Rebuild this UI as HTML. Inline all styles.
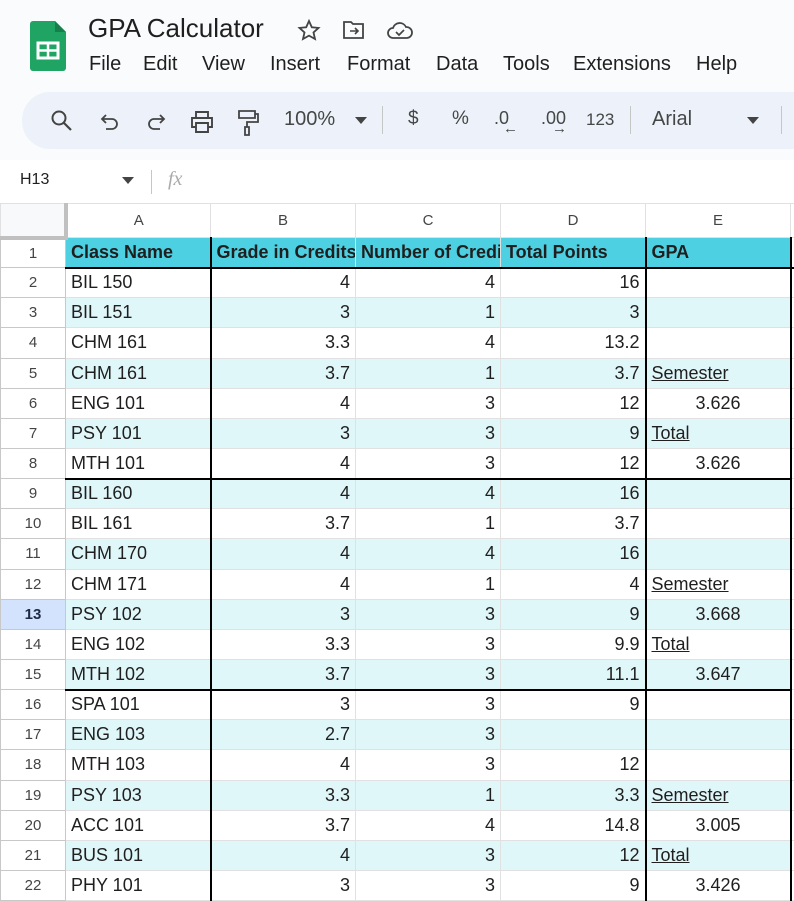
<!DOCTYPE html>
<html><head><meta charset="utf-8"><style>
*{margin:0;padding:0;box-sizing:border-box}
body{width:794px;height:899px;overflow:hidden;background:#fff;font-family:"Liberation Sans",Arial,sans-serif;position:relative;color:#1f1f1f}
.top{position:absolute;left:0;top:0;width:794px;height:160px;background:#f9fbfd}
.title{position:absolute;left:88px;top:13px;font-size:26px;color:#1f1f1f}
.menu{position:absolute;top:53px;font-size:20px;color:#1f1f1f}
.tb{position:absolute;left:22px;top:92px;width:800px;height:57px;background:#edf2fa;border-radius:28px}
.ti{position:absolute;top:108px;font-size:20px;color:#444746}
.sep{position:absolute;top:106px;width:1px;height:28px;background:#c4c7c5}
table{position:absolute;left:0;top:203px;width:800px;border-collapse:collapse;table-layout:fixed;font-size:18px}
td{border:1px solid #e1e1e1;height:30.15px;padding:0 5px;white-space:nowrap;overflow:hidden}
tr.h td{height:34px;text-align:center;font-size:15px;color:#444}
td.rn{text-align:center;font-size:15px;color:#444;background:#fff;border-color:#c8c8c8}
tr.hd td{background:#4dd0e1;font-weight:bold}
tr.o td{background:#e0f7fa}
tr.o td.rn,tr.hd td.rn{background:#fff;font-weight:normal}
.r{text-align:right}.c{text-align:center}.u{text-decoration:underline}
.bl{border-left:2px solid #000!important}
.bb td{border-bottom:2px solid #000}
.bb td.rn{border-bottom:1px solid #c8c8c8}
</style></head><body>
<div class="top"></div>
<svg style="position:absolute;left:30px;top:21px" width="36" height="50" viewBox="0 0 36 50"><path d="M3 0h22l11 11v36a3 3 0 0 1-3 3H3a3 3 0 0 1-3-3V3a3 3 0 0 1 3-3z" fill="#1fa463"/><path d="M25 0v11h11z" fill="#167f4b"/><rect x="8" y="22" width="20" height="15" fill="none" stroke="#fff" stroke-width="3"/><path d="M8 29.5h20M18 22v15" stroke="#fff" stroke-width="2.5"/></svg>
<div class="title">GPA Calculator</div>
<svg style="position:absolute;left:297px;top:19px" width="24" height="22" viewBox="0 0 24 22"><path d="M12 2l2.8 6.3 6.7.6-5 4.5 1.5 6.6L12 16.6 6 20l1.5-6.6-5-4.5 6.7-.6z" fill="none" stroke="#444" stroke-width="1.8"/></svg>
<svg style="position:absolute;left:342px;top:20px" width="24" height="20" viewBox="0 0 24 20"><path d="M2 2h7l2 2h10v14H2z" fill="none" stroke="#444" stroke-width="1.8"/><path d="M8 11h8M13 8l3 3-3 3" fill="none" stroke="#444" stroke-width="1.6"/></svg>
<svg style="position:absolute;left:386px;top:19px" width="28" height="22" viewBox="0 0 28 22"><path d="M7 19a5 5 0 0 1 0-10 7 7 0 0 1 13-1 5.5 5.5 0 0 1 1 11z" fill="none" stroke="#444" stroke-width="1.8"/><path d="M10 13l3 3 5-5" fill="none" stroke="#444" stroke-width="1.7"/></svg>
<div class="menu" style="left:89px">File</div><div class="menu" style="left:143px">Edit</div><div class="menu" style="left:202px">View</div><div class="menu" style="left:270px">Insert</div><div class="menu" style="left:347px">Format</div><div class="menu" style="left:436px">Data</div><div class="menu" style="left:503px">Tools</div><div class="menu" style="left:573px">Extensions</div><div class="menu" style="left:696px">Help</div>
<div class="tb"></div>
<svg style="position:absolute;left:50px;top:109px" width="24" height="24" viewBox="0 0 24 24"><circle cx="9" cy="9" r="6.5" fill="none" stroke="#444" stroke-width="2"/><path d="M14 14l7 7" stroke="#444" stroke-width="2.2"/></svg>
<svg style="position:absolute;left:100px;top:110px" width="22" height="24" viewBox="0 0 22 24"><path d="M6 5L2 9l4 4M2 9h10a5 5 0 0 1 0 10H6" fill="none" stroke="#444" stroke-width="1.8"/></svg>
<svg style="position:absolute;left:144px;top:110px" width="22" height="24" viewBox="0 0 22 24"><path d="M16 5l4 4-4 4M20 9H10a5 5 0 0 0 0 10h6" fill="none" stroke="#444" stroke-width="1.8"/></svg>
<svg style="position:absolute;left:189px;top:110px" width="26" height="24" viewBox="0 0 26 24"><path d="M7 8V2h12v6M7 17H3V8h20v9h-4M7 13h12v9H7z" fill="none" stroke="#444" stroke-width="1.9"/></svg>
<svg style="position:absolute;left:236px;top:109px" width="24" height="28" viewBox="0 0 24 28"><path d="M3 2h16v7H3zM19 5h3v8H11v5M9 18h4v8H9z" fill="none" stroke="#444" stroke-width="1.8"/></svg>
<div class="ti" style="left:284px">100%</div>
<svg style="position:absolute;left:355px;top:117px" width="12" height="8"><path d="M0 0h12L6 7z" fill="#444"/></svg>
<div class="sep" style="left:382px"></div>
<div class="ti" style="left:408px;font-size:19px">$</div>
<div class="ti" style="left:452px;font-size:19px">%</div>
<div class="ti" style="left:494px;font-size:18px">.0</div><div class="ti" style="left:503px;top:120px;font-size:15px">←</div>
<div class="ti" style="left:541px;font-size:18px">.00</div><div class="ti" style="left:552px;top:120px;font-size:15px">→</div>
<div class="ti" style="left:586px;font-size:17px;top:110px">123</div>
<div class="sep" style="left:630px"></div>
<div class="ti" style="left:652px">Arial</div>
<svg style="position:absolute;left:747px;top:117px" width="12" height="8"><path d="M0 0h12L6 7z" fill="#444"/></svg>
<div class="sep" style="left:781px"></div>
<div style="position:absolute;left:20px;top:171px;font-size:16px">H13</div>
<svg style="position:absolute;left:122px;top:177px" width="12" height="8"><path d="M0 0h12L6 7z" fill="#444"/></svg>
<div style="position:absolute;left:151px;top:170px;width:1px;height:24px;background:#c4c7c5"></div>
<div style="position:absolute;left:168px;top:168px;font-size:20px;font-style:italic;color:#aaa;font-family:'Liberation Serif',serif">fx</div>
<table>
<colgroup><col style="width:65px"><col style="width:145px"><col style="width:145px"><col style="width:145px"><col style="width:145px"><col style="width:145px"><col style="width:10px"></colgroup>
<tr class="h"><td style="background:#f8f9fa;border-right:4px solid #c0c0c0;border-bottom:4px solid #c0c0c0"></td><td>A</td><td>B</td><td>C</td><td>D</td><td>E</td><td></td></tr>
<tr class="hd bb"><td class="rn">1</td><td>Class Name</td><td class="bl">Grade in Credits</td><td>Number of Credits</td><td>Total Points</td><td class="bl">GPA</td><td class="bl" style="background:#fff"></td></tr>
<tr><td class="rn">2</td><td>BIL 150</td><td class="r bl">4</td><td class="r">4</td><td class="r">16</td><td class="bl"></td><td class="bl"></td></tr>
<tr class="o"><td class="rn">3</td><td>BIL 151</td><td class="r bl">3</td><td class="r">1</td><td class="r">3</td><td class="bl"></td><td class="bl" style="background:#fff"></td></tr>
<tr><td class="rn">4</td><td>CHM 161</td><td class="r bl">3.3</td><td class="r">4</td><td class="r">13.2</td><td class="bl"></td><td class="bl"></td></tr>
<tr class="o"><td class="rn">5</td><td>CHM 161</td><td class="r bl">3.7</td><td class="r">1</td><td class="r">3.7</td><td class="bl u">Semester</td><td class="bl" style="background:#fff"></td></tr>
<tr><td class="rn">6</td><td>ENG 101</td><td class="r bl">4</td><td class="r">3</td><td class="r">12</td><td class="bl c">3.626</td><td class="bl"></td></tr>
<tr class="o"><td class="rn">7</td><td>PSY 101</td><td class="r bl">3</td><td class="r">3</td><td class="r">9</td><td class="bl u">Total</td><td class="bl" style="background:#fff"></td></tr>
<tr class="bb"><td class="rn">8</td><td>MTH 101</td><td class="r bl">4</td><td class="r">3</td><td class="r">12</td><td class="bl c">3.626</td><td class="bl" style="border-bottom:1px solid #e1e1e1"></td></tr>
<tr class="o"><td class="rn">9</td><td>BIL 160</td><td class="r bl">4</td><td class="r">4</td><td class="r">16</td><td class="bl"></td><td class="bl" style="background:#fff"></td></tr>
<tr><td class="rn">10</td><td>BIL 161</td><td class="r bl">3.7</td><td class="r">1</td><td class="r">3.7</td><td class="bl"></td><td class="bl"></td></tr>
<tr class="o"><td class="rn">11</td><td>CHM 170</td><td class="r bl">4</td><td class="r">4</td><td class="r">16</td><td class="bl"></td><td class="bl" style="background:#fff"></td></tr>
<tr><td class="rn">12</td><td>CHM 171</td><td class="r bl">4</td><td class="r">1</td><td class="r">4</td><td class="bl u">Semester</td><td class="bl"></td></tr>
<tr class="o"><td class="rn" style="background:#d3e3fd!important;font-weight:bold;color:#1f2a44">13</td><td>PSY 102</td><td class="r bl">3</td><td class="r">3</td><td class="r">9</td><td class="bl c">3.668</td><td class="bl" style="background:#fff"></td></tr>
<tr><td class="rn">14</td><td>ENG 102</td><td class="r bl">3.3</td><td class="r">3</td><td class="r">9.9</td><td class="bl u">Total</td><td class="bl"></td></tr>
<tr class="o bb"><td class="rn">15</td><td>MTH 102</td><td class="r bl">3.7</td><td class="r">3</td><td class="r">11.1</td><td class="bl c">3.647</td><td class="bl" style="background:#fff;border-bottom:1px solid #e1e1e1"></td></tr>
<tr><td class="rn">16</td><td>SPA 101</td><td class="r bl">3</td><td class="r">3</td><td class="r">9</td><td class="bl"></td><td class="bl"></td></tr>
<tr class="o"><td class="rn">17</td><td>ENG 103</td><td class="r bl">2.7</td><td class="r">3</td><td class="r"></td><td class="bl"></td><td class="bl" style="background:#fff"></td></tr>
<tr><td class="rn">18</td><td>MTH 103</td><td class="r bl">4</td><td class="r">3</td><td class="r">12</td><td class="bl"></td><td class="bl"></td></tr>
<tr class="o"><td class="rn">19</td><td>PSY 103</td><td class="r bl">3.3</td><td class="r">1</td><td class="r">3.3</td><td class="bl u">Semester</td><td class="bl" style="background:#fff"></td></tr>
<tr><td class="rn">20</td><td>ACC 101</td><td class="r bl">3.7</td><td class="r">4</td><td class="r">14.8</td><td class="bl c">3.005</td><td class="bl"></td></tr>
<tr class="o"><td class="rn">21</td><td>BUS 101</td><td class="r bl">4</td><td class="r">3</td><td class="r">12</td><td class="bl u">Total</td><td class="bl" style="background:#fff"></td></tr>
<tr><td class="rn">22</td><td>PHY 101</td><td class="r bl">3</td><td class="r">3</td><td class="r">9</td><td class="bl c">3.426</td><td class="bl"></td></tr>
</table>
</body></html>
